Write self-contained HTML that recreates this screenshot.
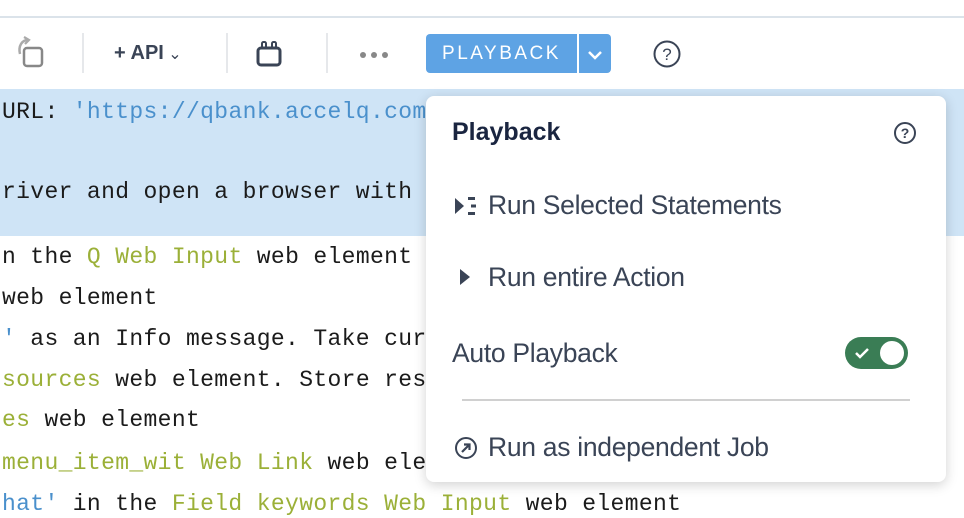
<!DOCTYPE html>
<html><head><style>
*{margin:0;padding:0;box-sizing:border-box}
body{width:964px;height:504px;overflow:hidden;background:#fff;position:relative;font-family:"Liberation Sans",sans-serif}
.topline{position:absolute;left:0;top:16px;width:964px;height:2px;background:#dbe3ea}
.sep{position:absolute;top:33px;width:2px;height:40px;background:#e6e8eb}
.code{position:absolute;left:2px;font-family:"Liberation Mono",monospace;font-size:23px;letter-spacing:0.35px;color:#1b1b1b;white-space:pre;line-height:28px}
.g{color:#9bb038}.b{color:#4a90cc}
.hl{position:absolute;left:0;top:89px;width:964px;height:147px;background:#cfe4f6}
.pb{position:absolute;left:426px;top:34px;width:151px;height:39px;background:#5ea3e4;border-radius:4px 0 0 4px;color:#fff;font-size:19px;letter-spacing:2.5px;text-align:center;line-height:39px}
.pbd{position:absolute;left:579px;top:34px;width:32px;height:39px;background:#5ea3e4;border-radius:0 4px 4px 0}
.panel{position:absolute;left:426px;top:96px;width:520px;height:386px;background:#fff;border-radius:8px;box-shadow:0 3px 12px rgba(0,0,0,0.18)}
.it{position:absolute;left:62px;font-size:26.5px;color:#3a4456;line-height:30px;letter-spacing:-0.3px}
</style></head><body>
<div class="topline"></div>
<svg style="position:absolute;left:12px;top:36px" width="36" height="34" viewBox="0 0 36 34"><rect x="12" y="12" width="18" height="18" rx="3" fill="none" stroke="#888" stroke-width="2.5"/><path d="M8 18 C6 10 10 4 16 4" fill="none" stroke="#aaa" stroke-width="2.5"/><path d="M12 1 L17 4 L13 8" fill="none" stroke="#aaa" stroke-width="2.2"/></svg>
<div class="sep" style="left:82px"></div>
<div style="position:absolute;left:114px;top:42px;font-size:20px;color:#3a4456;font-weight:bold">+ API<span style="font-weight:normal;font-size:16px"> ⌄</span></div>
<div class="sep" style="left:226px"></div>
<svg style="position:absolute;left:256px;top:40px" width="28" height="28" viewBox="0 0 28 28"><rect x="2" y="8" width="22" height="17" rx="3" fill="none" stroke="#3a4456" stroke-width="3"/><rect x="6" y="2" width="4" height="6" rx="1.5" fill="none" stroke="#3a4456" stroke-width="2"/><rect x="16" y="2" width="4" height="6" rx="1.5" fill="none" stroke="#3a4456" stroke-width="2"/></svg>
<div class="sep" style="left:326px"></div>
<div style="position:absolute;left:360px;top:52px;display:flex;gap:5px"><i style="width:6px;height:6px;border-radius:3px;background:#888"></i><i style="width:6px;height:6px;border-radius:3px;background:#888"></i><i style="width:6px;height:6px;border-radius:3px;background:#888"></i></div>
<div class="pb">PLAYBACK</div>
<div class="pbd"><svg width="32" height="39"><path d="M10 18 L16 24 L22 18" fill="none" stroke="#fff" stroke-width="2.5"/></svg></div>
<svg style="position:absolute;left:652px;top:39px" width="30" height="30" viewBox="0 0 30 30"><circle cx="15" cy="15" r="12.5" fill="none" stroke="#3a4456" stroke-width="2"/><text x="15" y="21" font-size="17" text-anchor="middle" fill="#3a4456" font-family="Liberation Sans">?</text></svg>
<div class="hl"></div>
<div class="code" style="top:98px">URL: <span class="b">'https://qbank.accelq.com</span></div>
<div class="code" style="top:178px">river and open a browser with</div>
<div class="code" style="top:243px">n the <span class="g">Q Web Input</span> web element</div>
<div class="code" style="top:284px">web element</div>
<div class="code" style="top:325px"><span class="b">'</span> as an Info message. Take cur</div>
<div class="code" style="top:366px"><span class="g">sources</span> web element. Store res</div>
<div class="code" style="top:406px"><span class="g">es</span> web element</div>
<div class="code" style="top:449px"><span class="g">menu_item_wit Web Link</span> web ele</div>
<div class="code" style="top:490px"><span class="b">hat'</span> in the <span class="g">Field keywords Web Input</span> web element</div>
<div class="panel">
<div style="position:absolute;left:26px;top:22px;font-size:25px;font-weight:bold;color:#1a2540">Playback</div>
<svg style="position:absolute;left:467px;top:25px" width="24" height="24" viewBox="0 0 24 24"><circle cx="12" cy="12" r="10" fill="none" stroke="#3a4456" stroke-width="2"/><text x="12" y="17" font-size="14" text-anchor="middle" fill="#3a4456" font-family="Liberation Sans" font-weight="bold">?</text></svg>
<svg style="position:absolute;left:28px;top:100px" width="26" height="20"><path d="M1 2 L10 10 L1 18Z" fill="#3a4456"/><rect x="14" y="1" width="7" height="3" fill="#3a4456"/><rect x="17" y="8.5" width="5" height="3" fill="#3a4456"/><rect x="14" y="16" width="7" height="3" fill="#3a4456"/></svg>
<div class="it" style="top:94px">Run Selected Statements</div>
<svg style="position:absolute;left:33px;top:172px" width="12" height="18"><path d="M1 1 L11 9 L1 17Z" fill="#3a4456"/></svg>
<div class="it" style="top:166px">Run entire Action</div>
<div class="it" style="top:242px;left:26px">Auto Playback</div>
<div style="position:absolute;left:419px;top:241px;width:63px;height:32px;border-radius:16px;background:#3a7d55"><svg style="position:absolute;left:9px;top:9px" width="16" height="14"><path d="M2 7 L6 11 L14 3" fill="none" stroke="#fff" stroke-width="2.5"/></svg><div style="position:absolute;right:4px;top:4px;width:24px;height:24px;border-radius:12px;background:#fff"></div></div>
<div style="position:absolute;left:36px;top:303px;width:448px;height:2px;background:#d0d0d0"></div>
<svg style="position:absolute;left:28px;top:340px" width="24" height="24" viewBox="0 0 24 24"><circle cx="12" cy="12" r="10" fill="none" stroke="#3a4456" stroke-width="2"/><path d="M8 16 L15 9 M10 8.5 L15.5 8.5 L15.5 14" fill="none" stroke="#3a4456" stroke-width="2.2"/></svg>
<div class="it" style="top:336px">Run as independent Job</div>
</div>
</body></html>
